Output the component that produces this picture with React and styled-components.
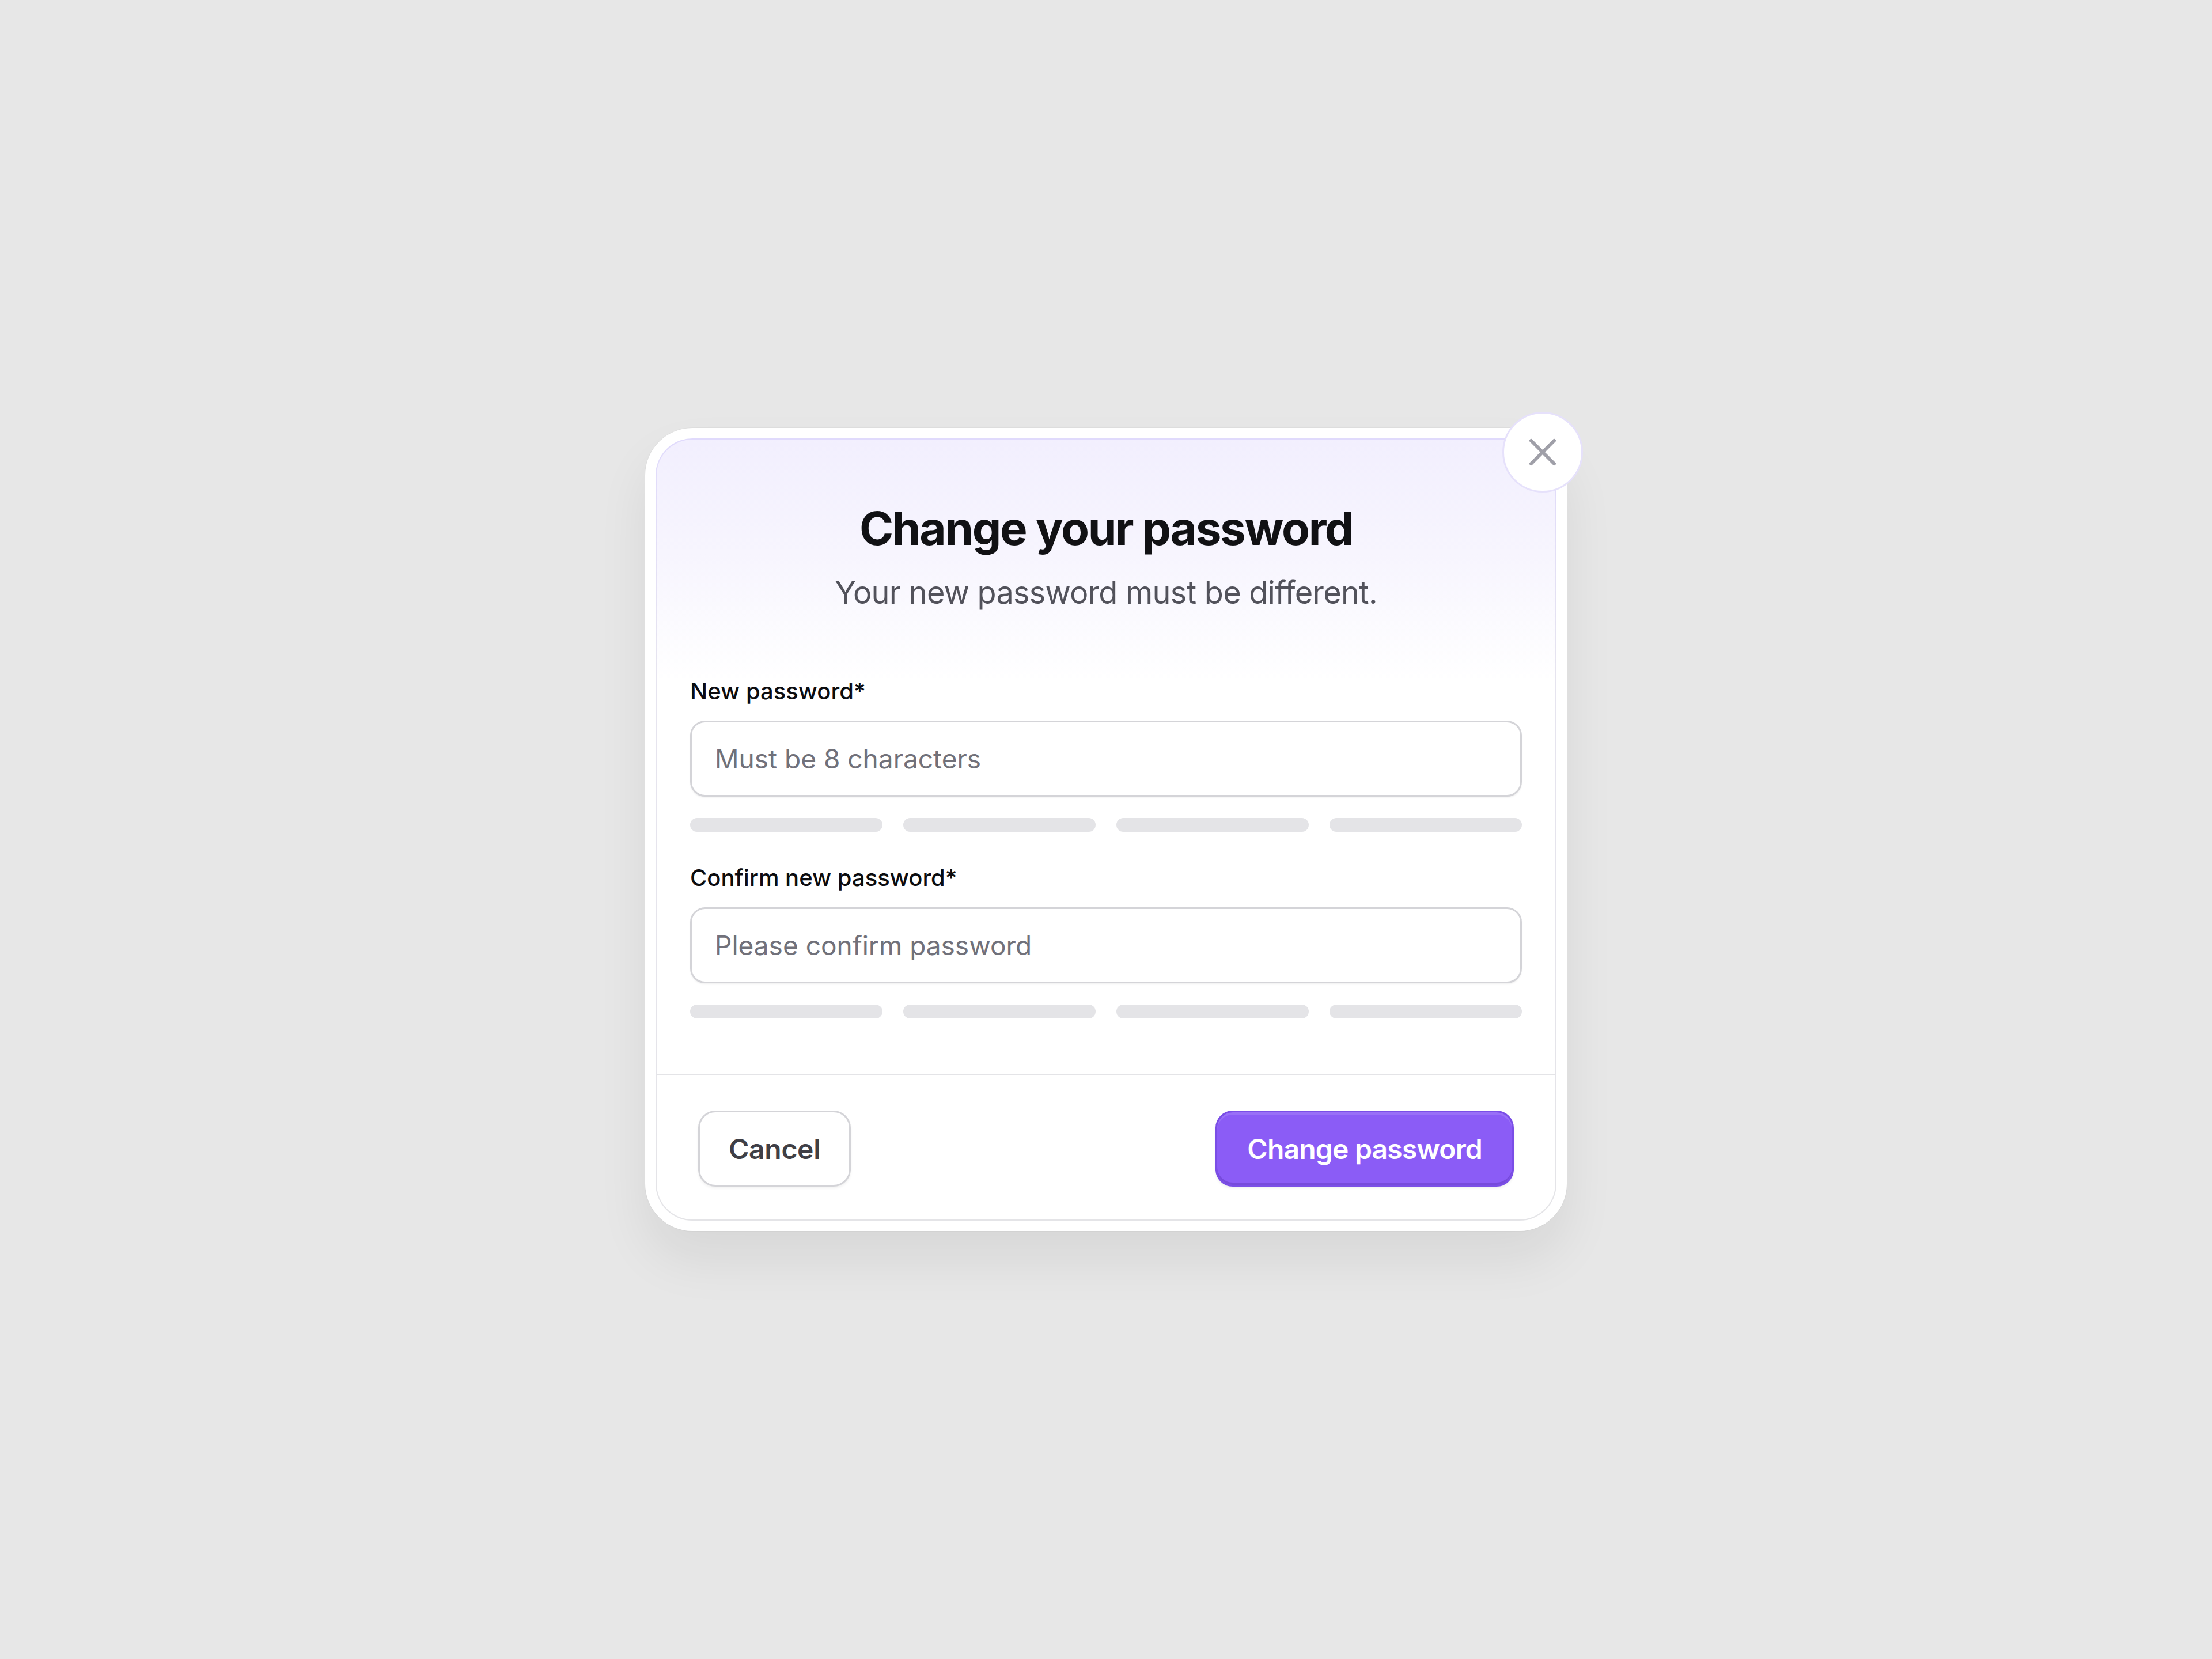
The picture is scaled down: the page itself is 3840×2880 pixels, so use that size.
import styled, { createGlobalStyle } from "styled-components";

const GlobalStyle = createGlobalStyle`
	html, body {
		margin: 0;
		padding: 0;
		background: #e7e7e7;
		font-family: Inter, "Noto Sans", "Liberation Sans", sans-serif;
		-webkit-font-smoothing: antialiased;
	}
	* { box-sizing: border-box; }
`;

const Page = styled.div`
	min-height: 100vh;
	display: flex;
	align-items: center;
	justify-content: center;
`;

const Shell = styled.div`
	position: relative;
	width: 1600px;
	padding: 18px;
	border-radius: 82px;
	background: #ffffff;
	box-shadow: 0 0 0 1px rgba(0, 0, 0, 0.03), 0 50px 90px rgba(0, 0, 0, 0.07);
`;

const Frame = styled.div`
	padding: 2px;
	border-radius: 64px;
	background: linear-gradient(180deg, #e0dafc 0%, #e6e4ef 30%, #e4e4e7 100%);
`;

const Panel = styled.div`
	border-radius: 62px;
	overflow: hidden;
	background: linear-gradient(180deg, #f2effe 0px, #f7f5fe 200px, #ffffff 420px);
`;

const Header = styled.header`
	padding-top: 106px;
	text-align: center;
`;

const Title = styled.h1`
	margin: 0;
	font-size: 80px;
	line-height: 96px;
	font-weight: 700;
	letter-spacing: -2.4px;
	color: #111114;
`;

const Subtitle = styled.p`
	margin: 26px 0 0;
	font-size: 54px;
	line-height: 76px;
	font-weight: 400;
	letter-spacing: -0.75px;
	color: #52525b;
`;

const Form = styled.div`
	display: flex;
	flex-direction: column;
	gap: 52px;
	padding: 105px 58px 96px;
`;

const Field = styled.div`
	display: flex;
	flex-direction: column;
`;

const Label = styled.label`
	font-size: 40px;
	line-height: 56px;
	font-weight: 500;
	color: #0c0c0f;
	margin-bottom: 23px;
`;

const Input = styled.input`
	height: 132px;
	width: 100%;
	padding: 0 40px;
	border: 3px solid #d4d4d8;
	border-radius: 26px;
	background: #ffffff;
	box-shadow: 0 2px 3px rgba(16, 16, 24, 0.05);
	font-family: inherit;
	font-size: 46px;
	color: #18181b;
	outline: none;

	&::placeholder {
		color: #71717a;
	}
`;

const Meter = styled.div`
	display: grid;
	grid-template-columns: repeat(4, 1fr);
	gap: 36px;
	margin-top: 37px;
`;

const Bar = styled.span`
	height: 24px;
	border-radius: 12px;
	background: ${(p) => (p.$on ? "#8b5cf6" : "#e4e4e7")};
`;

const Divider = styled.div`
	height: 2px;
	background: #e4e4e7;
`;

const Footer = styled.footer`
	display: flex;
	justify-content: space-between;
	align-items: center;
	padding: 62px 72px 57px;
`;

const Button = styled.button`
	height: 132px;
	padding: 0 ${(p) => (p.$primary ? "52px" : "50px")};
	border-radius: 30px;
	font-family: inherit;
	font-size: 48px;
	font-weight: 600;
	letter-spacing: ${(p) => (p.$primary ? "-0.8px" : "-0.3px")};
	cursor: pointer;
	border: 3px solid ${(p) => (p.$primary ? "#7a4ee6" : "#d4d4d8")};
	background: ${(p) => (p.$primary ? "#8b5cf6" : "#ffffff")};
	color: ${(p) => (p.$primary ? "#ffffff" : "#3f3f46")};
	box-shadow: ${(p) =>
		p.$primary
			? "inset 0 4px 0 rgba(255,255,255,0.12), inset 0 -4px 0 rgba(80,40,170,0.35), 0 3px 4px rgba(0,0,0,0.06)"
			: "0 3px 4px rgba(0,0,0,0.05)"};
`;

const Close = styled.button`
	position: absolute;
	top: -28px;
	right: -28px;
	width: 140px;
	height: 140px;
	border-radius: 50%;
	border: 3px solid #e6e1fb;
	background: #ffffff;
	display: flex;
	align-items: center;
	justify-content: center;
	padding: 0;
	cursor: pointer;
`;

const PasswordField = ({ label, placeholder }) => (
	<Field>
		<Label>{label}</Label>
		<Input type="password" placeholder={placeholder} />
		<Meter>
			{[0, 1, 2, 3].map((i) => (
				<Bar key={i} />
			))}
		</Meter>
	</Field>
);

const App = () => {
	return (
		<>
			<GlobalStyle />
			<Page>
				<Shell>
					<Close aria-label="Close">
						<svg width="48" height="48" viewBox="0 0 48 48" fill="none">
							<path d="M4 4L44 44M44 4L4 44" stroke="#9f9fa8" strokeWidth="6" strokeLinecap="round" />
						</svg>
					</Close>
					<Frame>
						<Panel>
							<Header>
								<Title>Change your password</Title>
								<Subtitle>Your new password must be different.</Subtitle>
							</Header>
							<Form>
								<PasswordField label="New password*" placeholder="Must be 8 characters" />
								<PasswordField label="Confirm new password*" placeholder="Please confirm password" />
							</Form>
							<Divider />
							<Footer>
								<Button>Cancel</Button>
								<Button $primary>Change password</Button>
							</Footer>
						</Panel>
					</Frame>
				</Shell>
			</Page>
		</>
	);
};

export default App;
